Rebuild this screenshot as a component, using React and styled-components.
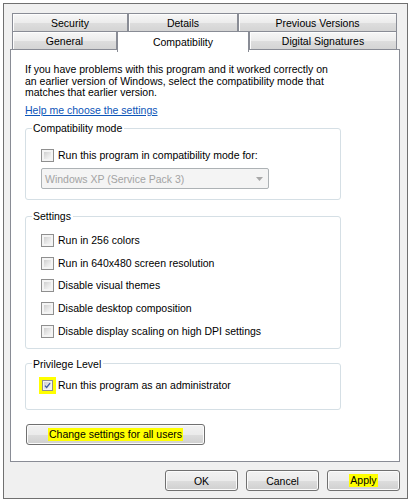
import React from "react";
import styled, { createGlobalStyle } from "styled-components";

const Global = createGlobalStyle`
  html, body { margin: 0; padding: 0; background: #ffffff; }
  body { font-family: "Liberation Sans", Arial, sans-serif; font-size: 10.5px; color: #000; }
  * { box-sizing: border-box; }
`;

const Window = styled.div`
  margin: 3px;
  width: 405px;
  height: 496px;
  border: 1px solid #707070;
  background: #f0f0f0;
  padding: 9px 7px 0 6px;
  display: flex;
  flex-direction: column;
`;

const TabStrip = styled.div`
  margin: 0 2px;
  display: flex;
  flex-direction: column;
`;

const TabRow = styled.div`
  display: flex;
  height: 18px;
  align-items: flex-end;
`;

const Tab = styled.div`
  width: ${(p) => p.$w}px;
  height: 18px;
  flex: none;
  border: 1px solid #898c95;
  border-bottom: none;
  padding-top: 2px;
  line-height: 15px;
  text-align: center;
  white-space: nowrap;
  background: linear-gradient(#f7f7f7, #ececec 50%, #dedede 51%, #d4d4d4);
  box-shadow: inset 1px 1px 0 #fdfdfd;
`;

const ActiveTab = styled(Tab)`
  height: 21px;
  margin-bottom: -3px;
  padding-top: 3px;
  background: #ffffff;
  box-shadow: none;
  position: relative;
  z-index: 1;
`;

const Panel = styled.div`
  width: 390px;
  height: 413px;
  flex: none;
  background: #ffffff;
  border: 1px solid #898c95;
  padding: 14px 0 0 14px;
  display: flex;
  flex-direction: column;
  align-items: flex-start;
`;

const Intro = styled.p`
  margin: 0;
  line-height: 11.7px;
  white-space: nowrap;
`;

const Link = styled.a`
  display: block;
  margin-top: 5px;
  line-height: 12px;
  color: #0d55b8;
  text-decoration: underline;
  cursor: pointer;
`;

const Group = styled.fieldset`
  margin: ${(p) => p.$mt}px 0 0 0;
  width: 316px;
  border: 1px solid #d5dfe5;
  border-radius: 3px;
  padding: 0 0 ${(p) => p.$pb}px 6px;
  min-width: 0;
  display: flex;
  flex-direction: column;
  align-items: flex-start;
`;

const Legend = styled.legend`
  padding: 0 2px 0 1px;
  line-height: 12px;
  color: #000;
`;

const Rows = styled.div`
  margin: ${(p) => p.$mt}px 0 0 9px;
  display: flex;
  flex-direction: column;
  gap: 9.7px;
`;

const Row = styled.label`
  display: flex;
  align-items: center;
  height: 13px;
  gap: 4px;
  line-height: 13px;
  white-space: nowrap;
`;

const Box = styled.span`
  flex: none;
  width: 13px;
  height: 13px;
  border: 1px solid #8f8f8f;
  padding: 2px;
  background: linear-gradient(135deg, #cfcfcf 0%, #e9e9e9 60%, #f6f6f6 100%) content-box, #f4f4f4;
  display: flex;
  align-items: center;
  justify-content: center;
  box-shadow: ${(p) => (p.$hl ? "0 0 0 1px #ffff00, 0 0 0 2px #ffff00" : "none")};
  ${(p) => (p.$hl ? "border-color: #ffff00; outline: 1px solid #8f8f8f; outline-offset: -2px;" : "")}
`;

const Select = styled.div`
  margin: 6px 0 0 9px;
  width: 228px;
  height: 21px;
  border: 1px solid #adb2b5;
  border-radius: 2px;
  background: #f4f4f4;
  color: #a3a3a3;
  padding: 0 0 0 3px;
  display: flex;
  align-items: center;
  justify-content: space-between;
  white-space: nowrap;
`;

const Arrow = styled.svg`
  margin-right: 5px;
  flex: none;
`;

const Button = styled.button`
  width: ${(p) => p.$w}px;
  height: 21px;
  margin: 0;
  padding: 0;
  border: 1px solid #707070;
  border-radius: 3px;
  background: linear-gradient(#f2f2f2, #ebebeb 50%, #dddddd 51%, #cfcfcf);
  box-shadow: inset 0 0 0 1px #fbfbfb;
  font-family: "Liberation Sans", Arial, sans-serif;
  font-size: 10.5px;
  color: #000;
  display: flex;
  align-items: center;
  justify-content: center;
`;

const WideButton = styled(Button)`
  margin: 14px 0 0 1px;
`;

const Mark = styled.span`
  background: #ffff00;
  line-height: 13px;
  padding: 0 1px;
`;

const Footer = styled.div`
  margin-top: 8px;
  display: flex;
  justify-content: flex-end;
  gap: 8px;
  width: 390px;
`;

function Check({ checked, hl }) {
  return (
    <Box $hl={hl}>
      {checked && (
        <svg width="9" height="9" viewBox="0 0 9 9">
          <path d="M1.2 4.6 L3.4 7 L7.8 1.4" fill="none" stroke="#3c5aa0" strokeWidth="1.6" />
        </svg>
      )}
    </Box>
  );
}

const settings = [
  "Run in 256 colors",
  "Run in 640x480 screen resolution",
  "Disable visual themes",
  "Disable desktop composition",
  "Disable display scaling on high DPI settings",
];

export default function App() {
  return (
    <>
      <Global />
      <Window>
        <TabStrip>
          <TabRow>
            <Tab $w={116}>Security</Tab>
            <Tab $w={110}>Details</Tab>
            <Tab $w={159}>Previous Versions</Tab>
          </TabRow>
          <TabRow>
            <Tab $w={105}>General</Tab>
            <ActiveTab $w={132}>Compatibility</ActiveTab>
            <Tab $w={148}>Digital Signatures</Tab>
          </TabRow>
        </TabStrip>
        <Panel>
          <Intro>
            If you have problems with this program and it worked correctly on
            <br />
            an earlier version of Windows, select the compatibility mode that
            <br />
            matches that earlier version.
          </Intro>
          <Link>Help me choose the settings</Link>

          <Group $mt={6} $pb={10}>
            <Legend>Compatibility mode</Legend>
            <Rows $mt={15}>
              <Row>
                <Check />
                Run this program in compatibility mode for:
              </Row>
            </Rows>
            <Select>
              Windows XP (Service Pack 3)
              <Arrow width="7" height="4" viewBox="0 0 7 4">
                <path d="M0 0 H7 L3.5 4 Z" fill="#a8a8a8" />
              </Arrow>
            </Select>
          </Group>

          <Group $mt={10} $pb={10}>
            <Legend>Settings</Legend>
            <Rows $mt={12}>
              {settings.map((s) => (
                <Row key={s}>
                  <Check />
                  {s}
                </Row>
              ))}
            </Rows>
          </Group>

          <Group $mt={9} $pb={17}>
            <Legend>Privilege Level</Legend>
            <Rows $mt={9}>
              <Row>
                <Check checked hl />
                Run this program as an administrator
              </Row>
            </Rows>
          </Group>

          <WideButton $w={179}>
            <Mark>Change settings for all users</Mark>
          </WideButton>
        </Panel>
        <Footer>
          <Button $w={73}>OK</Button>
          <Button $w={73}>Cancel</Button>
          <Button $w={73}>
            <Mark>Apply</Mark>
          </Button>
        </Footer>
      </Window>
    </>
  );
}
